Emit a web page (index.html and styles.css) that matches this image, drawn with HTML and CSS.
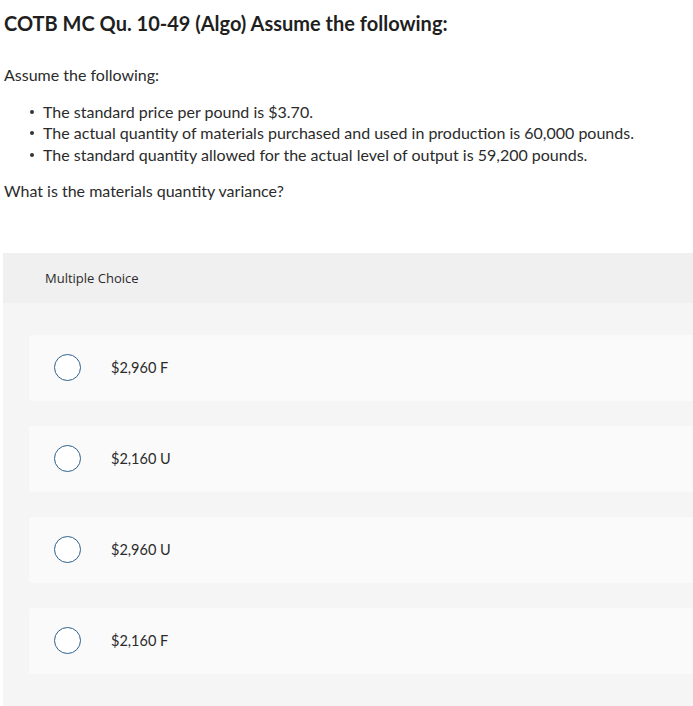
FILE: index.html
```html
<!DOCTYPE html>
<html>
<head>
<meta charset="utf-8">
<link rel="stylesheet" href="styles.css">
</head>
<body>
<div class="page">
  <h1 class="title">COTB MC Qu. 10-49 (Algo) Assume the following:</h1>
  <div class="prompt">
    <p class="lead">Assume the following:</p>
    <ul class="facts">
      <li>The standard price per pound is $3.70.</li>
      <li>The actual quantity of materials purchased and used in production is 60,000 pounds.</li>
      <li>The standard quantity allowed for the actual level of output is 59,200 pounds.</li>
    </ul>
    <p class="question">What is the materials quantity variance?</p>
  </div>
  <section class="mc">
    <div class="mc-head">Multiple Choice</div>
    <div class="mc-body">
      <div class="option"><span class="radio"></span><span class="label">$2,960 F</span></div>
      <div class="option"><span class="radio"></span><span class="label">$2,160 U</span></div>
      <div class="option"><span class="radio"></span><span class="label">$2,960 U</span></div>
      <div class="option"><span class="radio"></span><span class="label">$2,160 F</span></div>
    </div>
  </section>
</div>
</body>
</html>
```
FILE: styles.css
```css
html, body {
  margin: 0;
  padding: 0;
  background: #ffffff;
}
.page {
  padding: 0 0 0 3px;
  font-family: "Lato", "Open Sans", sans-serif;
  color: #2b2b2b;
}
.title {
  margin: 0;
  padding: 12px 0 0 1px;
  font-size: 20px;
  line-height: 22px;
  font-weight: 700;
  color: #1f1f1f;
}
.prompt {
  padding: 0 0 0 1px;
  font-size: 16px;
  line-height: 21.5px;
}
.lead {
  margin: 30px 0 0;
}
.facts {
  margin: 15px 0 0;
  padding-left: 39px;
  list-style: none;
}
.facts li {
  position: relative;
}
.facts li::before {
  content: "";
  position: absolute;
  left: -13px;
  top: 9px;
  width: 4px;
  height: 4px;
  border-radius: 50%;
  background: #333333;
}
.question {
  margin: 15px 0 0;
}
.mc {
  margin-top: 51px;
  background: #f5f5f5;
  height: 455px;
}
.mc-head {
  background: #f0f0f0;
  height: 50px;
  box-sizing: border-box;
  padding: 16px 0 0 42px;
  font-family: "Open Sans", sans-serif;
  font-size: 13px;
  color: #2a2a2a;
}
.mc-body {
  padding: 32px 0 0 26px;
  display: flex;
  flex-direction: column;
  gap: 25px;
}
.option {
  background: #fafafa;
  height: 66px;
  border-radius: 3px 0 0 3px;
  display: flex;
  align-items: center;
  padding-left: 25px;
}
.radio {
  width: 25px;
  height: 25px;
  border: 1.5px solid #2d5f8f;
  border-radius: 50%;
  background: #ffffff;
  flex: none;
}
.label {
  margin-left: 30px;
  font-size: 14.5px;
  color: #2b2b2b;
}
```
